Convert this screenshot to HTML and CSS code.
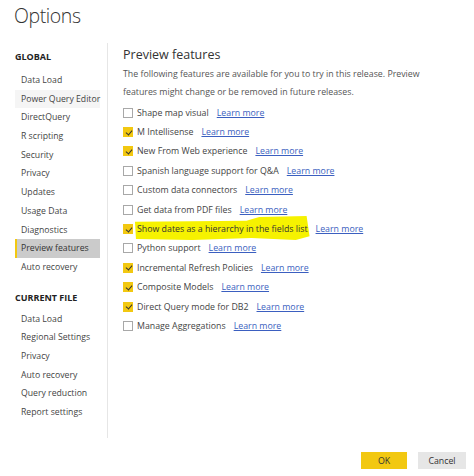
FILE: index.html
```html
<!DOCTYPE html>
<html>
<head>
<meta charset="utf-8">
<link rel="stylesheet" href="styles.css">
</head>
<body>
<div class="dialog">
  <h1 class="title">Options</h1>
  <div class="main">
    <nav class="sidebar">
      <div class="section">GLOBAL</div>
      <ul class="nav">
        <li>Data Load</li>
        <li class="hover">Power Query Editor</li>
        <li>DirectQuery</li>
        <li>R scripting</li>
        <li>Security</li>
        <li>Privacy</li>
        <li>Updates</li>
        <li>Usage Data</li>
        <li>Diagnostics</li>
        <li class="active">Preview features</li>
        <li>Auto recovery</li>
      </ul>
      <div class="section second">CURRENT FILE</div>
      <ul class="nav">
        <li>Data Load</li>
        <li>Regional Settings</li>
        <li>Privacy</li>
        <li>Auto recovery</li>
        <li>Query reduction</li>
        <li>Report settings</li>
      </ul>
    </nav>
    <section class="content">
      <h2 class="heading">Preview features</h2>
      <p class="desc">The following features are available for you to try in this release. Preview features might change or be removed in future releases.</p>
      <ul class="features">
        <li><span class="cb"></span><span class="label">Shape map visual</span><a class="link">Learn more</a></li>
        <li><span class="cb on"></span><span class="label">M Intellisense</span><a class="link">Learn more</a></li>
        <li><span class="cb on"></span><span class="label">New From Web experience</span><a class="link">Learn more</a></li>
        <li><span class="cb"></span><span class="label">Spanish language support for Q&amp;A</span><a class="link">Learn more</a></li>
        <li><span class="cb"></span><span class="label">Custom data connectors</span><a class="link">Learn more</a></li>
        <li><span class="cb"></span><span class="label">Get data from PDF files</span><a class="link">Learn more</a></li>
        <li><span class="cb on"></span><span class="label marked"><svg class="marker" viewBox="0 0 180 26" preserveAspectRatio="none"><path d="M2 6 L115 5 L128 1 L176 0 L179 21 L165 25 L120 23 L60 25 L3 24 Z" fill="#f6f200"/></svg><span class="marktext">Show dates as a hierarchy in the fields list</span></span><a class="link">Learn more</a></li>
        <li><span class="cb"></span><span class="label">Python support</span><a class="link">Learn more</a></li>
        <li><span class="cb on"></span><span class="label">Incremental Refresh Policies</span><a class="link">Learn more</a></li>
        <li><span class="cb on"></span><span class="label">Composite Models</span><a class="link">Learn more</a></li>
        <li><span class="cb on"></span><span class="label">Direct Query mode for DB2</span><a class="link">Learn more</a></li>
        <li><span class="cb"></span><span class="label">Manage Aggregations</span><a class="link">Learn more</a></li>
      </ul>
    </section>
  </div>
  <div class="footer">
    <button class="btn ok">OK</button>
    <button class="btn cancel">Cancel</button>
  </div>
</div>
</body>
</html>
```
FILE: styles.css
```css
html, body {
  margin: 0;
  padding: 0;
  background: #fff;
}
body {
  font-family: "Open Sans", "Noto Sans", "Liberation Sans", sans-serif;
  color: #444;
  width: 474px;
  height: 476px;
  overflow: hidden;
}
.dialog {
  display: flex;
  flex-direction: column;
  height: 476px;
}
.title {
  margin: 0;
  padding: 1px 0 0 14px;
  font-size: 19.5px;
  font-weight: 300;
  letter-spacing: -0.4px;
  line-height: 30px;
  color: #333;
  height: 43px;
  box-sizing: border-box;
}
.main {
  display: flex;
  height: 395px;
}
.sidebar {
  width: 108px;
  border-right: 1px solid #e6e6e6;
  padding-top: 6px;
  box-sizing: border-box;
  flex: none;
}
.section {
  padding-left: 15px;
  font-size: 9px;
  font-weight: 700;
  color: #222;
  line-height: 16px;
  margin-bottom: 6px;
}
.section.second {
  margin-top: 13px;
  margin-bottom: 4px;
}
.nav {
  list-style: none;
  margin: 0;
  padding: 0;
}
.nav li {
  margin-left: 15px;
  width: 85px;
  padding-left: 6px;
  box-sizing: border-box;
  font-size: 8.7px;
  line-height: 18.7px;
  height: 18.7px;
  white-space: nowrap;
  color: #444;
}
.nav li.hover {
  background: #f5f5f5;
}
.nav li.active {
  background: #cbcbcb;
  border-left: 2px solid #f2c811;
  padding-left: 4px;
  color: #333;
}
.content {
  padding-left: 15px;
  flex: 1;
}
.heading {
  margin: 0;
  padding-top: 2px;
  font-size: 12.5px;
  font-weight: 400;
  line-height: 20px;
  color: #333;
}
.desc {
  margin: 0;
  font-size: 8.8px;
  line-height: 18px;
  color: #555;
  width: 305px;
}
.features {
  list-style: none;
  margin: 2px 0 0 0;
  padding: 0;
}
.features li {
  display: flex;
  align-items: center;
  height: 19.4px;
  font-size: 8.8px;
  white-space: nowrap;
}
.cb {
  width: 10px;
  height: 10px;
  border: 1px solid #a8a8a8;
  background: #fff;
  box-sizing: border-box;
  margin-right: 4px;
  position: relative;
  flex: none;
}
.cb.on {
  background: #f2c811;
  border-color: #f2c811;
}
.cb.on::after {
  content: "";
  position: absolute;
  left: 2.5px;
  top: 0.5px;
  width: 3px;
  height: 5px;
  border-right: 1.5px solid #333;
  border-bottom: 1.5px solid #333;
  transform: rotate(40deg);
}
.label {
  color: #444;
  margin-right: 8px;
}
.marked {
  position: relative;
}
.marker {
  position: absolute;
  left: -4px;
  top: -7px;
  width: calc(100% + 7px);
  height: 25px;
}
.marktext {
  position: relative;
  color: #333;
}
.link {
  color: #3b5fc0;
  text-decoration: underline;
}
.footer {
  display: flex;
  justify-content: flex-end;
  gap: 11px;
  padding: 14px 8px 0 0;
}
.btn {
  font-family: inherit;
  font-size: 8.8px;
  border: none;
  height: 17px;
  width: 46px;
  padding: 0;
  color: #333;
}
.btn.ok {
  background: #f2c811;
}
.btn.cancel {
  background: #e6e6e6;
  width: 48px;
}
```
